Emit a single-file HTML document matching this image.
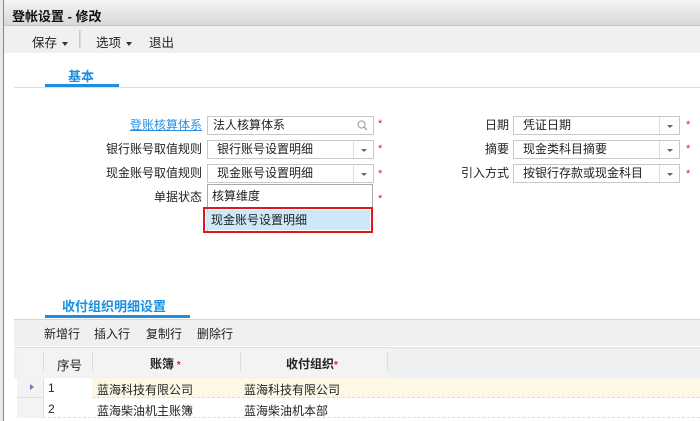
<!DOCTYPE html>
<html><head><meta charset="utf-8"><style>
*{margin:0;padding:0;box-sizing:border-box}
body{width:700px;height:421px;overflow:hidden;background:#fff;font-family:"Liberation Sans","Noto Sans CJK SC",sans-serif;font-size:12px;color:#222;position:relative}
.a{position:absolute;white-space:nowrap}
.lbl{position:absolute;text-align:right;white-space:nowrap;line-height:18px}
.box{position:absolute;border:1px solid #c8c8c8;background:#fff;height:19px;line-height:17px;padding-left:5px}
.dd{position:absolute;right:0;top:0;width:20px;height:17px;border-left:1px solid #ddd}
.dd:after{content:"";position:absolute;left:7px;top:8px;border-left:3px solid transparent;border-right:3px solid transparent;border-top:3px solid #666}
.star{position:absolute;color:#e02020;font-size:11px}
.tri{display:inline-block;border-left:3px solid transparent;border-right:3px solid transparent;border-top:4px solid #333;vertical-align:middle;margin-left:5px}
</style></head><body>
<div class="a" style="left:0;top:0;width:3px;height:421px;background:#e8e8e8"></div>
<div class="a" style="left:3px;top:0;width:1px;height:421px;background:#888"></div>
<div class="a" style="left:4px;top:0;width:696px;height:26px;background:linear-gradient(#f4f4f4,#d8d8d8);border-bottom:1px solid #c8c8c8"></div>
<div class="a" style="left:12px;top:6px;font-weight:bold;font-size:13px;color:#111">登帐设置 - 修改</div>
<div class="a" style="left:4px;top:26px;width:696px;height:27px;background:#f0f0f0"></div>
<div class="a" style="left:32px;top:32px;font-size:12.5px">保存<span class="tri"></span></div>
<div class="a" style="left:79px;top:30px;width:2px;height:18px;background:#dadada;border-left:1px solid #ccc"></div>
<div class="a" style="left:96px;top:32px;font-size:12.5px">选项<span class="tri"></span></div>
<div class="a" style="left:149px;top:32px;font-size:12.5px">退出</div>
<div class="a" style="left:68px;top:66px;color:#1e8fe0;font-size:13px;font-weight:bold">基本</div>
<div class="a" style="left:14px;top:87px;width:686px;height:1px;background:#ddd"></div>
<div class="a" style="left:45px;top:84px;width:74px;height:3px;background:#1e8fe0"></div>

<div class="lbl" style="right:498px;top:116px;color:#2a8fe0;text-decoration:underline">登账核算体系</div>
<div class="box" style="left:207px;top:116px;width:167px">法人核算体系<svg style="position:absolute;right:5px;top:3px" width="11" height="11"><circle cx="4.5" cy="4.5" r="3.5" fill="none" stroke="#aaa" stroke-width="1.3"/><path d="M7 7L10 10" stroke="#aaa" stroke-width="1.5"/></svg></div>
<div class="star" style="left:378px;top:118px">*</div>
<div class="lbl" style="right:498px;top:140px">银行账号取值规则</div>
<div class="box" style="left:207px;top:140px;width:167px;padding-left:9px">银行账号设置明细<div class="dd"></div></div>
<div class="star" style="left:378px;top:143px">*</div>
<div class="lbl" style="right:498px;top:164px">现金账号取值规则</div>
<div class="box" style="left:207px;top:164px;width:167px;padding-left:9px">现金账号设置明细<div class="dd"></div></div>
<div class="star" style="left:378px;top:168px">*</div>
<div class="lbl" style="right:498px;top:188px">单据状态</div>
<div class="star" style="left:378px;top:193px">*</div>
<div class="a" style="left:207px;top:184px;width:166px;height:48px;border:1px solid #aaa;background:#fff"></div>
<div class="a" style="left:212px;top:187px;line-height:18px">核算维度</div>
<div class="a" style="left:203px;top:207px;width:170px;height:26px;border:2px solid #e01818"></div>
<div class="a" style="left:206px;top:210px;width:164px;height:20px;background:#cde8f8;padding-left:5px;line-height:20px">现金账号设置明细</div>

<div class="lbl" style="right:191px;top:116px">日期</div>
<div class="box" style="left:513px;top:116px;width:167px;padding-left:9px">凭证日期<div class="dd"></div></div>
<div class="star" style="left:686px;top:119px">*</div>
<div class="lbl" style="right:191px;top:140px">摘要</div>
<div class="box" style="left:513px;top:140px;width:167px;padding-left:9px">现金类科目摘要<div class="dd"></div></div>
<div class="star" style="left:686px;top:143px">*</div>
<div class="lbl" style="right:191px;top:164px">引入方式</div>
<div class="box" style="left:513px;top:164px;width:167px;padding-left:9px">按银行存款或现金科目<div class="dd"></div></div>
<div class="star" style="left:686px;top:168px">*</div>

<div class="a" style="left:62px;top:296px;color:#1e8fe0;font-size:13px;font-weight:bold">收付组织明细设置</div>
<div class="a" style="left:45px;top:315px;width:145px;height:3px;background:#1e8fe0"></div>
<div class="a" style="left:14px;top:319px;width:686px;height:27px;background:#f0f0f0;border-top:1px solid #d6d6d6"></div>
<div class="a" style="left:44px;top:325px">新增行</div>
<div class="a" style="left:94px;top:325px">插入行</div>
<div class="a" style="left:146px;top:325px">复制行</div>
<div class="a" style="left:197px;top:325px">删除行</div>
<div class="a" style="left:14px;top:347px;width:686px;height:31px;background:#eff0f2;border-top:1px solid #e4e4e4"></div>
<div class="a" style="left:17px;top:348px;width:371px;height:29px;background:#f3f3f3"></div>
<div class="a" style="left:43px;top:352px;width:1px;height:20px;background:#ddd"></div>
<div class="a" style="left:92px;top:352px;width:1px;height:20px;background:#ddd"></div>
<div class="a" style="left:240px;top:352px;width:1px;height:20px;background:#ddd"></div>
<div class="a" style="left:387px;top:352px;width:1px;height:20px;background:#ddd"></div>
<div class="a" style="left:57px;top:355px;font-size:12.5px">序号</div>
<div class="a" style="left:150px;top:355px;font-weight:bold">账簿<span style="color:#e02020;font-size:10px"> *</span></div>
<div class="a" style="left:286px;top:355px;font-weight:bold">收付组织<span style="color:#e02020;font-size:10px">*</span></div>
<div class="a" style="left:17px;top:378px;width:26px;height:40px;background:#f3f3f3"></div>
<div class="a" style="left:43px;top:378px;width:49px;height:40px;border-left:1px solid #e0e0e0"></div>
<div class="a" style="left:92px;top:378px;width:608px;height:20px;background:#fdf7e6;border-bottom:1px dashed #ddd"></div>
<div class="a" style="left:43px;top:398px;width:657px;height:20px;border-bottom:1px dashed #ddd"></div>
<div class="a" style="left:17px;top:397px;width:26px;height:1px;background:#e0e0e0"></div>
<div class="a" style="left:30px;top:384px;border-top:3px solid transparent;border-bottom:3px solid transparent;border-left:4px solid #7a7ab0"></div>
<div class="a" style="left:48px;top:381px">1</div>
<div class="a" style="left:97px;top:381px">蓝海科技有限公司</div>
<div class="a" style="left:244px;top:381px">蓝海科技有限公司</div>
<div class="a" style="left:48px;top:402px">2</div>
<div class="a" style="left:97px;top:402px">蓝海柴油机主账簿</div>
<div class="a" style="left:244px;top:402px">蓝海柴油机本部</div>
</body></html>
